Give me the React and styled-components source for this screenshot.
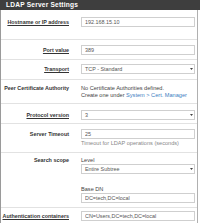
import styled, { createGlobalStyle } from "styled-components";

const GlobalStyle = createGlobalStyle`
  html, body {
    margin: 0;
    padding: 0;
    background: #fff;
  }
  body {
    font-family: "Liberation Sans", Arial, sans-serif;
  }
`;

const App = () => {
  return (
    <>
      <GlobalStyle />
      <Panel>
        <Heading>LDAP Server Settings</Heading>
        <Body>
          <Row $top={7} $bottom={12}>
            <Label $required>Hostname or IP address</Label>
            <Content>
              <Input readOnly value="192.168.15.10" />
            </Content>
          </Row>
          <Row $top={5} $bottom={4}>
            <Label $required>Port value</Label>
            <Content>
              <Input readOnly value="389" />
            </Content>
          </Row>
          <Row $top={4} $bottom={5}>
            <Label $required>Transport</Label>
            <Content>
              <Select>
                TCP - Standard
                <Arrow />
              </Select>
            </Content>
          </Row>
          <Row $top={5} $bottom={4}>
            <Label $text>Peer Certificate Authority</Label>
            <Content>
              <Text>No Certificate Authorities defined.</Text>
              <Text>
                Create one under <Link>System &gt; Cert. Manager</Link>
              </Text>
            </Content>
          </Row>
          <Row $top={6} $bottom={3}>
            <Label $required>Protocol version</Label>
            <Content>
              <Select>
                3
                <Arrow />
              </Select>
            </Content>
          </Row>
          <Row $top={5} $bottom={5}>
            <Label>Server Timeout</Label>
            <Content>
              <Input readOnly value="25" />
              <Help>Timeout for LDAP operations (seconds)</Help>
            </Content>
          </Row>
          <Row $top={4} $bottom={4}>
            <Label $text>Search scope</Label>
            <Content>
              <Text>Level</Text>
              <Select>
                Entire Subtree
                <Arrow />
              </Select>
              <SubLabel>Base DN</SubLabel>
              <Input readOnly value="DC=tech,DC=local" />
            </Content>
          </Row>
          <Row $top={3} $bottom={3}>
            <Label $required>Authentication containers</Label>
            <Content>
              <Input readOnly value="CN=Users,DC=tech,DC=local" />
            </Content>
          </Row>
        </Body>
      </Panel>
    </>
  );
};

const Arrow = () => (
  <ArrowIcon width="3" height="2" viewBox="0 0 3 2">
    <path d="M0 0 L3 0 L1.5 2 Z" fill="#444" />
  </ArrowIcon>
);

const Panel = styled.div`
  width: 200px;
  height: 223px;
  overflow: hidden;
`;

const Heading = styled.div`
  height: 10px;
  background: #3e3e3e;
  color: #fff;
  font-size: 6.6px;
  font-weight: 700;
  line-height: 10px;
  letter-spacing: 0.2px;
  padding-left: 6px;
`;

const Body = styled.div`
  width: 196px;
  border-left: 1px solid #9a9a9a;
  border-right: 1px solid #b0b0b0;
`;

const Row = styled.div`
  display: grid;
  grid-template-columns: 68px 1fr;
  column-gap: 12px;
  align-items: start;
  padding: ${(p) => p.$top ?? 5}px 2px ${(p) => p.$bottom ?? 5}px 0;
  & + & {
    border-top: 1px solid #e2e2e2;
  }
`;

const Label = styled.div`
  text-align: right;
  font-size: 5.4px;
  font-weight: 700;
  color: #333;
  white-space: nowrap;
  line-height: ${(p) => (p.$text ? "7px" : "10px")};
  text-decoration: ${(p) => (p.$required ? "underline" : "none")};
  text-underline-offset: 1px;
`;

const Content = styled.div`
  display: flex;
  flex-direction: column;
  min-width: 0;
`;

const Input = styled.input`
  box-sizing: border-box;
  width: 100%;
  height: 10px;
  margin: 0;
  padding: 0 3px;
  border: 1px solid #cfcfcf;
  border-radius: 0;
  background: #fff;
  font-family: "Liberation Sans", Arial, sans-serif;
  font-size: 5.4px;
  color: #555;
  outline: none;
`;

const Select = styled.div`
  box-sizing: border-box;
  position: relative;
  width: 100%;
  height: 10px;
  padding: 0 3px;
  border: 1px solid #cfcfcf;
  background: #fff;
  font-size: 5.4px;
  line-height: 8px;
  color: #555;
`;

const ArrowIcon = styled.svg`
  position: absolute;
  right: 1px;
  top: 3px;
`;

const Text = styled.div`
  font-size: 5.6px;
  line-height: 7px;
  color: #444;
  white-space: nowrap;
`;

const SubLabel = styled(Text)`
  margin-top: 11px;
  line-height: 8px;
`;

const Link = styled.span`
  color: #3b7dbf;
`;

const Help = styled.div`
  margin-top: 1px;
  font-size: 5.6px;
  line-height: 7px;
  color: #888;
  white-space: nowrap;
`;

export default App;
